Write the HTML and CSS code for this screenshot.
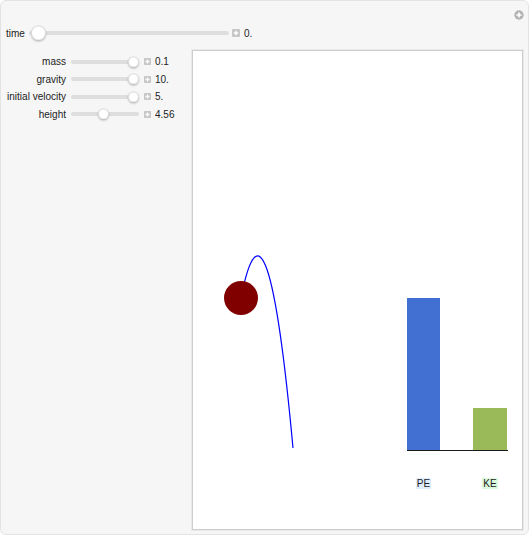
FILE: index.html
```html
<!DOCTYPE html>
<html>
<head>
<meta charset="utf-8">
<link rel="stylesheet" href="styles.css">
</head>
<body>
<div class="panel">
  <div class="topbar">
    <svg class="add-icon" width="10" height="10" viewBox="0 0 10 10"><circle cx="5" cy="5" r="4.7" fill="#b3b3b3"/><path d="M5 2.4v5.2M2.4 5h5.2" stroke="#fff" stroke-width="1.6"/></svg>
  </div>
  <div class="time-row">
    <span class="time-label">time</span>
    <div class="track track-long"><span class="thumb thumb-lg" style="left:2px"></span></div>
    <svg class="plus plus-lg" width="8" height="8" viewBox="0 0 8 8"><rect width="8" height="8" rx="1" fill="#c6c6c6"/><path d="M4 1.8v4.4M1.8 4h4.4" stroke="#fff" stroke-width="1.4"/></svg>
    <span class="value">0.</span>
  </div>
  <div class="body">
    <div class="controls">
      <div class="row">
        <span class="label">mass</span>
        <div class="track track-short"><span class="thumb thumb-sm" style="left:56.5px"></span></div>
        <svg class="plus plus-sm" width="7" height="7" viewBox="0 0 7 7"><rect width="7" height="7" rx="1" fill="#c6c6c6"/><path d="M3.5 1.5v4M1.5 3.5h4" stroke="#fff" stroke-width="1.3"/></svg>
        <span class="value">0.1</span>
      </div>
      <div class="row">
        <span class="label">gravity</span>
        <div class="track track-short"><span class="thumb thumb-sm" style="left:56.5px"></span></div>
        <svg class="plus plus-sm" width="7" height="7" viewBox="0 0 7 7"><rect width="7" height="7" rx="1" fill="#c6c6c6"/><path d="M3.5 1.5v4M1.5 3.5h4" stroke="#fff" stroke-width="1.3"/></svg>
        <span class="value">10.</span>
      </div>
      <div class="row">
        <span class="label">initial velocity</span>
        <div class="track track-short"><span class="thumb thumb-sm" style="left:56.5px"></span></div>
        <svg class="plus plus-sm" width="7" height="7" viewBox="0 0 7 7"><rect width="7" height="7" rx="1" fill="#c6c6c6"/><path d="M3.5 1.5v4M1.5 3.5h4" stroke="#fff" stroke-width="1.3"/></svg>
        <span class="value">5.</span>
      </div>
      <div class="row">
        <span class="label">height</span>
        <div class="track track-short"><span class="thumb thumb-sm" style="left:26.5px"></span></div>
        <svg class="plus plus-sm" width="7" height="7" viewBox="0 0 7 7"><rect width="7" height="7" rx="1" fill="#c6c6c6"/><path d="M3.5 1.5v4M1.5 3.5h4" stroke="#fff" stroke-width="1.3"/></svg>
        <span class="value">4.56</span>
      </div>
    </div>
    <div class="plot">
      <svg class="plot-svg" width="329" height="478" viewBox="193 51 329 478">
        <path d="M241 298 Q267 166 293 448" fill="none" stroke="#0000ff" stroke-width="1.2"/>
        <circle cx="241" cy="298" r="17" fill="#800000"/>
        <rect x="407" y="298" width="33" height="152" fill="#4170d2"/>
        <rect x="473" y="408" width="34" height="42" fill="#9aba5a"/>
        <line x1="407" y1="450.5" x2="508" y2="450.5" stroke="#1a1a1a" stroke-width="1"/>
        <rect x="416" y="478" width="15" height="11" fill="#dfeefe"/>
        <text x="423.5" y="487" class="bar-label" text-anchor="middle">PE</text>
        <rect x="482" y="478" width="16" height="11" fill="#dcfadc"/>
        <text x="490" y="487" class="bar-label" text-anchor="middle">KE</text>
      </svg>
    </div>
  </div>
</div>
</body>
</html>
```
FILE: styles.css
```css
html, body {
  margin: 0;
  padding: 0;
  background: #ffffff;
}
body {
  font-family: "Liberation Sans", Arial, sans-serif;
  font-size: 10px;
  color: #222;
}
.panel {
  box-sizing: border-box;
  width: 529px;
  height: 535px;
  border: 1px solid #e3e3e3;
  border-radius: 6px;
  background: #f6f6f6;
  display: flex;
  flex-direction: column;
}
.topbar {
  box-sizing: border-box;
  height: 23px;
  display: flex;
  justify-content: flex-end;
  align-items: flex-start;
  padding: 9px 4px 0 0;
}
.add-icon {
  display: block;
}
.time-row {
  height: 18px;
  display: flex;
  align-items: center;
  padding-left: 5px;
}
.track {
  position: relative;
  height: 4px;
  border-radius: 2px;
  background: #dedede;
  flex: none;
}
.track-long {
  width: 200px;
  margin-left: 4px;
}
.track-short {
  width: 68px;
  margin-left: 5px;
}
.thumb {
  position: absolute;
  top: 50%;
  transform: translateY(-50%);
  box-sizing: border-box;
  border-radius: 50%;
  background: #ffffff;
  border: 1px solid rgba(0, 0, 0, 0.12);
  box-shadow: 0 1px 2px rgba(0, 0, 0, 0.25);
}
.thumb-lg {
  width: 15px;
  height: 15px;
}
.thumb-sm {
  width: 11px;
  height: 11px;
}
.plus {
  display: block;
  flex: none;
}
.plus-lg {
  margin-left: 3px;
}
.plus-sm {
  margin-left: 5px;
}
.value {
  margin-left: 4px;
}
.body {
  display: flex;
  margin-top: 8px;
}
.controls {
  width: 191px;
  padding-top: 3px;
  flex: none;
}
.row {
  height: 17.5px;
  display: flex;
  align-items: center;
  padding-left: 4px;
}
.label {
  width: 61px;
  text-align: right;
  white-space: nowrap;
}
.plot {
  box-sizing: border-box;
  width: 331px;
  height: 480px;
  border: 1px solid #cdcdcd;
  background: #ffffff;
  box-shadow: 0 0 0 1px #e9e9e9;
  flex: none;
}
.plot-svg {
  display: block;
}
.bar-label {
  font-family: "Liberation Sans", Arial, sans-serif;
  font-size: 10px;
  fill: #1c1c1c;
}
```
